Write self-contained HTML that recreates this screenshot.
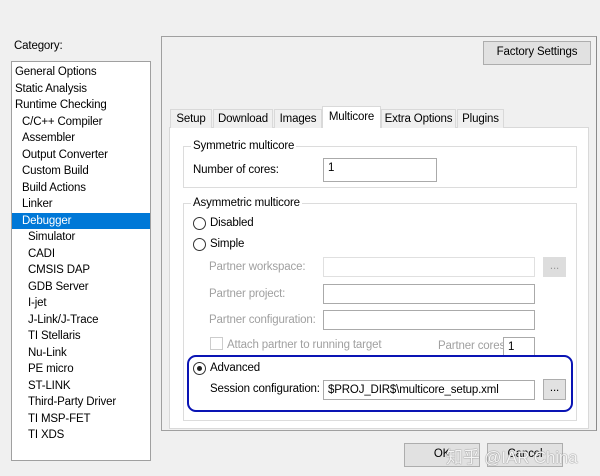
<!DOCTYPE html>
<html><head><meta charset="utf-8"><style>
*{margin:0;padding:0;box-sizing:border-box}
body{width:600px;height:476px;background:#f0f0f0;font-family:"Liberation Sans",sans-serif;font-size:11.5px;letter-spacing:-0.15px;color:#000;position:relative;overflow:hidden}
.a{position:absolute;white-space:nowrap}
.list{position:absolute;left:11px;top:61px;width:140px;height:400px;background:#fff;border:1px solid #a0a0a0}
.li{position:absolute;left:0;width:138px;height:16px;line-height:16px}
.sel{background:#0078d7;color:#fff}
.btn{position:absolute;background:#e1e1e1;border:1px solid #adadad;text-align:center;line-height:21px}
.inp{position:absolute;background:#fff;border:1px solid #7a7a7a;padding-left:4px;line-height:18px}
.g{color:#a0a0a0}
.grp{position:absolute;border:1px solid #dcdcdc}
.rad{position:absolute;width:13px;height:13px;border:1px solid #333;border-radius:50%;background:#fff}
.tab{position:absolute;top:109px;height:19px;line-height:18px;text-align:center;background:#f0f0f0;border:1px solid #d9d9d9;border-bottom:none}
</style></head><body>
<div class="a" style="left:14px;top:40px">Category:</div>
<div class="list">
<div class="li" style="top:2px;padding-left:3px">General Options</div>
<div class="li" style="top:18.5px;padding-left:3px">Static Analysis</div>
<div class="li" style="top:35px;padding-left:3px">Runtime Checking</div>
<div class="li" style="top:51.5px;padding-left:10px">C/C++ Compiler</div>
<div class="li" style="top:68px;padding-left:10px">Assembler</div>
<div class="li" style="top:84.5px;padding-left:10px">Output Converter</div>
<div class="li" style="top:101px;padding-left:10px">Custom Build</div>
<div class="li" style="top:117.5px;padding-left:10px">Build Actions</div>
<div class="li" style="top:134px;padding-left:10px">Linker</div>
<div class="li sel" style="top:150.5px;padding-left:10px">Debugger</div>
<div class="li" style="top:167px;padding-left:16px">Simulator</div>
<div class="li" style="top:183.5px;padding-left:16px">CADI</div>
<div class="li" style="top:200px;padding-left:16px">CMSIS DAP</div>
<div class="li" style="top:216.5px;padding-left:16px">GDB Server</div>
<div class="li" style="top:233px;padding-left:16px">I-jet</div>
<div class="li" style="top:249.5px;padding-left:16px">J-Link/J-Trace</div>
<div class="li" style="top:266px;padding-left:16px">TI Stellaris</div>
<div class="li" style="top:282.5px;padding-left:16px">Nu-Link</div>
<div class="li" style="top:299px;padding-left:16px">PE micro</div>
<div class="li" style="top:315.5px;padding-left:16px">ST-LINK</div>
<div class="li" style="top:332px;padding-left:16px">Third-Party Driver</div>
<div class="li" style="top:348.5px;padding-left:16px">TI MSP-FET</div>
<div class="li" style="top:365px;padding-left:16px">TI XDS</div>
</div>
<div class="a" style="left:161px;top:36px;width:436px;height:395px;border:1px solid #a0a0a0;border-right-color:#8a8a8a"></div>
<div class="btn" style="left:483px;top:41px;width:108px;height:24px">Factory Settings</div>
<div class="a" style="left:169px;top:127px;width:420px;height:302px;background:#fff;border:1px solid #d9d9d9"></div>
<div class="tab" style="left:170px;width:42px">Setup</div>
<div class="tab" style="left:213px;width:60px">Download</div>
<div class="tab" style="left:274px;width:48px">Images</div>
<div class="tab" style="left:322px;width:59px;top:106px;height:22px;background:#fff;line-height:20px">Multicore</div>
<div class="tab" style="left:381px;width:75px">Extra Options</div>
<div class="tab" style="left:457px;width:47px">Plugins</div>
<div class="grp" style="left:183px;top:146px;width:394px;height:42px"></div>
<div class="a" style="left:191px;top:140px;background:#fff;padding:0 2px">Symmetric multicore</div>
<div class="a" style="left:193px;top:164px">Number of cores:</div>
<div class="inp" style="left:323px;top:158px;width:114px;height:24px;border-color:#aaa">1</div>
<div class="grp" style="left:183px;top:203px;width:394px;height:218px"></div>
<div class="a" style="left:191px;top:197px;background:#fff;padding:0 2px">Asymmetric multicore</div>
<div class="rad" style="left:193px;top:217px"></div><div class="a" style="left:210px;top:217px">Disabled</div>
<div class="rad" style="left:193px;top:238px"></div><div class="a" style="left:210px;top:238px">Simple</div>
<div class="a g" style="left:209px;top:261px">Partner workspace:</div>
<div class="inp" style="left:323px;top:257px;width:212px;height:20px;border-color:#e0e0e0"></div>
<div class="btn" style="left:543px;top:257px;width:23px;height:20px;line-height:16px;color:#999;background:#ddd;border-color:#ddd">...</div>
<div class="a g" style="left:209px;top:288px">Partner project:</div>
<div class="inp" style="left:323px;top:284px;width:212px;height:20px;border-color:#aaa"></div>
<div class="a g" style="left:209px;top:314px">Partner configuration:</div>
<div class="inp" style="left:323px;top:310px;width:212px;height:20px;border-color:#aaa"></div>
<div class="a" style="left:210px;top:337px;width:13px;height:13px;border:1px solid #ccc"></div>
<div class="a g" style="left:227px;top:339px">Attach partner to running target</div>
<div class="a g" style="left:438px;top:340px">Partner cores</div>
<div class="inp" style="left:503px;top:337px;width:32px;height:20px;border-color:#aaa">1</div>
<div class="a" style="left:187px;top:355px;width:386px;height:57px;border:2px solid #0a14b4;border-radius:9px"></div>
<div class="rad" style="left:193px;top:362px"><div style="position:absolute;left:3px;top:3px;width:5px;height:5px;border-radius:50%;background:#222"></div></div>
<div class="a" style="left:210px;top:362px">Advanced</div>
<div class="a" style="left:210px;top:383px">Session configuration:</div>
<div class="inp" style="left:323px;top:380px;width:212px;height:20px;border-color:#aaa">$PROJ_DIR$\multicore_setup.xml</div>
<div class="btn" style="left:543px;top:379px;width:23px;height:21px;line-height:16px">...</div>
<div class="btn" style="left:404px;top:443px;width:76px;height:24px">OK</div>
<div class="btn" style="left:487px;top:443px;width:76px;height:24px">Cancel</div>
<div class="a" style="left:446px;top:443px;font-size:17px;color:rgba(255,255,255,0.9);font-family:'Liberation Sans','Noto Sans CJK SC',sans-serif;text-shadow:0 0 1px #888,0 0 1px #888">知乎 @IAR China</div>
</body></html>
